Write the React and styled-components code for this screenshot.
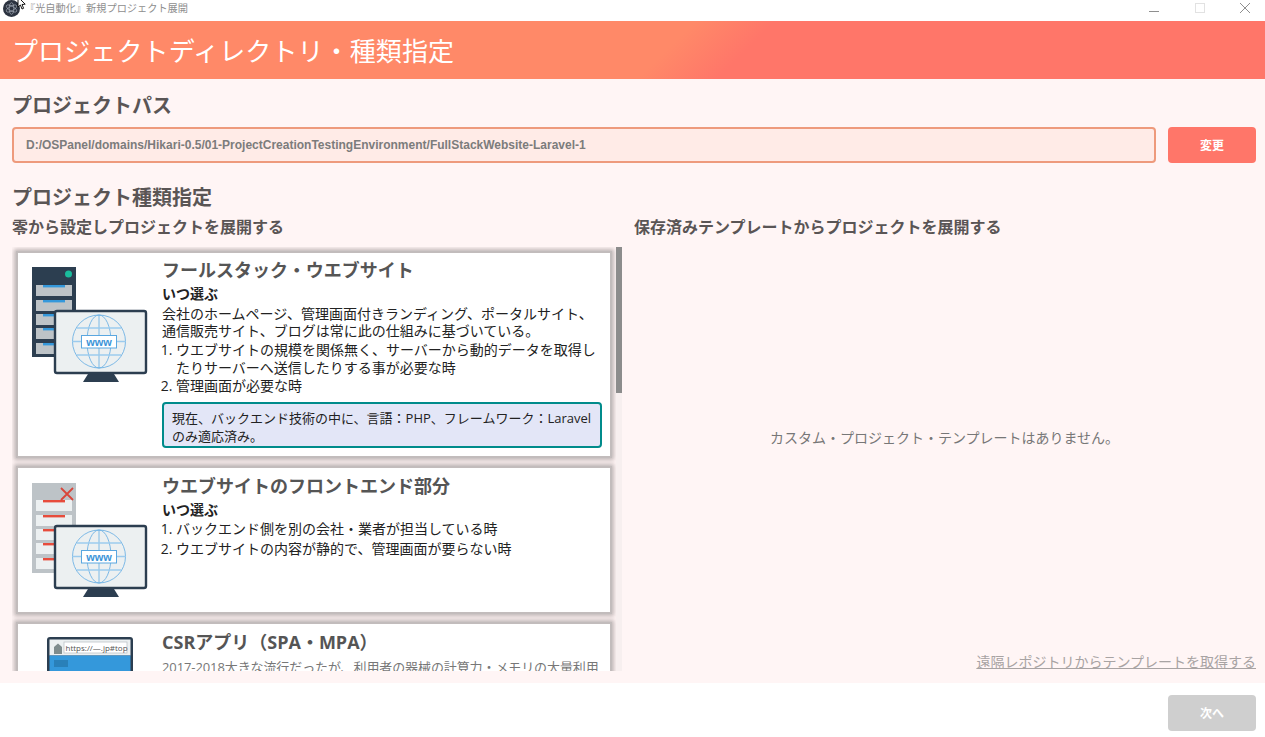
import React from 'react';
import styled, { createGlobalStyle } from 'styled-components';

const JP = `"Open Sans", "Noto Sans CJK JP", sans-serif`;

const GlobalStyle = createGlobalStyle`
  html, body {
    margin: 0;
    padding: 0;
    height: 100%;
    background: #fff;
  }
  * {
    box-sizing: border-box;
  }
  #root {
    height: 737px;
  }
`;

const Globe = () => (
  <g fill="none" stroke="#6fb2e4" strokeWidth="0.9">
    <circle cx="69" cy="76.5" r="26.5" />
    <ellipse cx="69" cy="76.5" rx="12" ry="26.5" />
    <path d="M69 50v53" />
    <path d="M47 63h44M42.5 76.5h53M47 90h44" strokeWidth="1.5" stroke="#9ccbee" />
    <rect x="51.5" y="70.5" width="35" height="12.5" fill="#fff" stroke="#5aa7e0" strokeWidth="1" />
    <text x="69" y="80.5" textAnchor="middle" fontFamily="Liberation Sans, sans-serif" fontSize="11" fontWeight="700" fill="#3c94d8" stroke="none">www</text>
  </g>
);

const Monitor = () => (
  <g>
    <path d="M60 109h22l2 0 5 8H53l5-8z" fill="#2c3e50" />
    <rect x="25" y="46" width="91" height="62" rx="2" fill="#ecf0f1" stroke="#2c3e50" strokeWidth="2.4" />
    <Globe />
  </g>
);

const DRAWERS = [20, 35, 49, 63, 78];

const ServerIcon = ({ removed }) => (
  <IconSvg viewBox="0 0 120 120">
    <rect x="2" y={removed ? 3 : 2} width="44" height="90" fill={removed ? '#bdc3c7' : '#2c3e50'} />
    {DRAWERS.map((y) => (
      <g key={y}>
        <rect x="6" y={y} width="36" height="11" fill={removed ? '#ecf0f1' : '#bdc3c7'} />
        <rect x="13" y={y} width="22" height="2.4" fill={removed ? '#e74c3c' : '#3498db'} />
      </g>
    ))}
    {removed ? (
      <path d="M31 8l12 12M43 8L31 20" stroke="#d9463a" strokeWidth="1.8" fill="none" />
    ) : (
      <circle cx="38.5" cy="9" r="3.5" fill="#1abc9c" />
    )}
    <Monitor />
  </IconSvg>
);

const BrowserIcon = () => (
  <IconSvg viewBox="0 0 120 120">
    <rect x="17" y="1" width="86" height="118" rx="3" fill="#2c3e50" />
    <rect x="19.5" y="3.5" width="81" height="16" fill="#ecf0f1" />
    <path d="M24 18v-7l4-3.5 4 3.5v7z" fill="#7f8c8d" />
    <rect x="34" y="6" width="63" height="11" fill="#fff" stroke="#bdc3c7" strokeWidth="0.8" />
    <text x="35.5" y="14.5" fontFamily="Open Sans, sans-serif" fontSize="8" fill="#555">https://—.jp#top</text>
    <rect x="19.5" y="19.5" width="81" height="98" fill="#3498db" />
    <rect x="24" y="24" width="14" height="7" fill="#2980b9" />
  </IconSvg>
);

const CursorIcon = () => (
  <Cursor viewBox="0 0 12 12">
    <path d="M1 -3l0 10 2.4-2 1.6 4 1.6-.7-1.6-3.8 3.2-.3z" fill="#fff" stroke="#000" strokeWidth="0.9" />
  </Cursor>
);

const AppIcon = () => (
  <AppLogo viewBox="0 0 16 16">
    <circle cx="8" cy="8" r="8" fill="#2c3340" />
    <g fill="none" stroke="#aab2bd" strokeWidth="0.6">
      <ellipse cx="8" cy="8" rx="5.5" ry="2.2" transform="rotate(30 8 8)" />
      <ellipse cx="8" cy="8" rx="5.5" ry="2.2" transform="rotate(90 8 8)" />
      <ellipse cx="8" cy="8" rx="5.5" ry="2.2" transform="rotate(150 8 8)" />
    </g>
  </AppLogo>
);

export default function App() {
  return (
    <>
      <GlobalStyle />
      <Page>
        <TitleBar>
          <TitleLeft>
            <AppIcon />
            <CursorIcon />
            <WindowTitle>『光自動化』新規プロジェクト展開</WindowTitle>
          </TitleLeft>
          <WindowControls>
            <ControlIcon viewBox="0 0 10 10"><path d="M0 8.5h10" /></ControlIcon>
            <ControlIcon $light viewBox="0 0 10 10"><rect x="0.5" y="0.5" width="9" height="9" /></ControlIcon>
            <ControlIcon viewBox="0 0 10 10"><path d="M0 0l10 10M10 0L0 10" /></ControlIcon>
          </WindowControls>
        </TitleBar>

        <Header>プロジェクトディレクトリ・種類指定</Header>

        <Main>
          <SectionTitle $bottom={6}>プロジェクトパス</SectionTitle>
          <PathRow>
            <PathField>D:/OSPanel/domains/Hikari-0.5/01-ProjectCreationTestingEnvironment/FullStackWebsite-Laravel-1</PathField>
            <ActionButton>変更</ActionButton>
          </PathRow>

          <SectionTitle $top={20} $bottom={2}>プロジェクト種類指定</SectionTitle>
          <Columns>
            <Column>
              <ColumnTitle>零から設定しプロジェクトを展開する</ColumnTitle>
              <ListFrame>
                <CardList>
                  <Card>
                    <ServerIcon />
                    <CardBody>
                      <CardTitle>フールスタック・ウエブサイト</CardTitle>
                      <WhenLabel>いつ選ぶ</WhenLabel>
                      <Paragraph>会社のホームページ、管理画面付きランディング、ポータルサイト、通信販売サイト、ブログは常に此の仕組みに基づいている。</Paragraph>
                      <Steps>
                        <li>ウエブサイトの規模を関係無く、サーバーから動的データを取得したりサーバーへ送信したりする事が必要な時</li>
                        <li>管理画面が必要な時</li>
                      </Steps>
                      <Notice>現在、バックエンド技術の中に、言語：PHP、フレームワーク：Laravelのみ適応済み。</Notice>
                    </CardBody>
                  </Card>
                  <Card>
                    <ServerIcon removed />
                    <CardBody $lower>
                      <CardTitle>ウエブサイトのフロントエンド部分</CardTitle>
                      <WhenLabel>いつ選ぶ</WhenLabel>
                      <Steps $gap={3}>
                        <li>バックエンド側を別の会社・業者が担当している時</li>
                        <li>ウエブサイトの内容が静的で、管理画面が要らない時</li>
                      </Steps>
                    </CardBody>
                  </Card>
                  <Card>
                    <BrowserIcon />
                    <CardBody $lower>
                      <CardTitle>CSRアプリ（SPA・MPA）</CardTitle>
                      <Paragraph $muted>2017-2018大きな流行だったが、利用者の器械の計算力・メモリの大量利用</Paragraph>
                    </CardBody>
                  </Card>
                </CardList>
                <ScrollTrack>
                  <ScrollThumb />
                </ScrollTrack>
              </ListFrame>
            </Column>
            <Column>
              <ColumnTitle>保存済みテンプレートからプロジェクトを展開する</ColumnTitle>
              <TemplatePanel>
                <EmptyMessage>カスタム・プロジェクト・テンプレートはありません。</EmptyMessage>
                <RemoteLink href="#">遠隔レポジトリからテンプレートを取得する</RemoteLink>
              </TemplatePanel>
            </Column>
          </Columns>
        </Main>

        <Footer>
          <ActionButton $disabled>次へ</ActionButton>
        </Footer>
      </Page>
    </>
  );
}

const Page = styled.div`
  height: 737px;
  display: flex;
  flex-direction: column;
  font-family: ${JP};
  overflow: hidden;
`;

const TitleBar = styled.div`
  height: 21px;
  flex: none;
  display: flex;
  align-items: flex-start;
  justify-content: space-between;
  background: #fff;
`;

const TitleLeft = styled.div`
  position: relative;
  display: flex;
  align-items: center;
  padding: 0 0 0 3px;
  height: 16px;
`;

const AppLogo = styled.svg`
  width: 17px;
  height: 17px;
  margin-right: 5px;
`;

const Cursor = styled.svg`
  position: absolute;
  left: 17px;
  top: 0;
  width: 12px;
  height: 12px;
  overflow: visible;
`;

const WindowTitle = styled.span`
  font-size: 10.2px;
  color: #8e8e8e;
  line-height: 16px;
`;

const WindowControls = styled.div`
  display: flex;
  gap: 35.5px;
  padding: 3px 15px 0 0;
`;

const ControlIcon = styled.svg`
  width: 10px;
  height: 10px;
  fill: none;
  stroke: ${(p) => (p.$light ? '#e2e2e2' : '#8f8f8f')};
  stroke-width: 1;
`;

const Header = styled.header`
  height: 58px;
  flex: none;
  display: flex;
  align-items: center;
  padding-left: 12px;
  font-size: 26px;
  letter-spacing: 0.12px;
  color: #fff;
  background: linear-gradient(135deg, #ff8968 0%, #ff8968 52.6%, #ff7669 58.6%, #ff7669 100%);
`;

const Main = styled.main`
  height: 604px;
  flex: none;
  display: flex;
  flex-direction: column;
  padding: 12px 9px 12px 12px;
  background: #fff5f5;
`;

const SectionTitle = styled.h2`
  margin: ${(p) => p.$top || 0}px 0 ${(p) => p.$bottom}px;
  height: 30px;
  line-height: 30px;
  font-size: 20px;
  font-weight: 700;
  color: #5a5555;
`;

const PathRow = styled.div`
  display: flex;
  gap: 12px;
`;

const PathField = styled.div`
  flex: 1;
  height: 36px;
  display: flex;
  align-items: center;
  padding-left: 12px;
  font-family: "Liberation Sans", sans-serif;
  font-size: 12px;
  font-weight: 700;
  color: #7c7c7c;
  background: #ffebe7;
  border: 2px solid #ee9a7c;
  border-radius: 4px;
`;

const ActionButton = styled.button`
  width: 88px;
  height: 36px;
  flex: none;
  border: none;
  border-radius: 4px;
  font-family: ${JP};
  font-size: 12px;
  font-weight: 700;
  color: #fff;
  background: ${(p) => (p.$disabled ? '#cfcfcf' : '#ff7669')};
`;

const Columns = styled.div`
  flex: 1;
  min-height: 0;
  display: grid;
  grid-template-columns: 622px 1fr;
`;

const Column = styled.section`
  min-height: 0;
  display: flex;
  flex-direction: column;
`;

const ColumnTitle = styled.h3`
  margin: 0 0 8px;
  height: 24px;
  line-height: 24px;
  font-size: 16px;
  font-weight: 700;
  color: #5a5555;
`;

const ListFrame = styled.div`
  flex: 1;
  min-height: 0;
  width: 610px;
  display: flex;
`;

const CardList = styled.div`
  flex: 1;
  min-width: 0;
  overflow: hidden;
  display: flex;
  flex-direction: column;
  gap: 12px;
  padding: 6px;
`;

const ScrollTrack = styled.div`
  width: 6px;
  flex: none;
  background: #f7efef;
`;

const ScrollThumb = styled.div`
  height: 146px;
  background: #8c8c8c;
`;

const Card = styled.article`
  display: flex;
  flex: none;
  gap: 12px;
  padding: 12px 8px 12px 12px;
  background: #fff;
  box-shadow: 0 0 0 2px #c2bcbc, 0 0 4px 4px rgba(150, 142, 142, 0.6);
`;

const IconSvg = styled.svg`
  width: 120px;
  height: 120px;
  flex: none;
`;

const CardBody = styled.div`
  flex: 1;
  min-width: 0;
  margin: ${(p) => (p.$lower ? -6 : -7)}px 0 -4px;
`;

const CardTitle = styled.h4`
  margin: 0 0 3px;
  line-height: 24px;
  font-size: 18px;
  font-weight: 700;
  color: #555;
`;

const WhenLabel = styled.div`
  line-height: 18px;
  font-size: 14px;
  font-weight: 700;
  color: #222;
`;

const Paragraph = styled.p`
  margin: ${(p) => (p.$muted ? '5px 0 0' : '2px 0')};
  line-height: 17px;
  font-size: ${(p) => (p.$muted ? 13 : 14)}px;
  letter-spacing: ${(p) => (p.$muted ? -0.1 : 0)}px;
  color: ${(p) => (p.$muted ? '#777' : '#222')};
`;

const Steps = styled.ol`
  margin: 1px 0 0;
  padding: 0 0 0 14px;
  font-size: 14px;
  line-height: 17.5px;
  color: #222;

  li {
    margin-bottom: ${(p) => p.$gap || 1}px;
  }
`;

const Notice = styled.div`
  margin-top: 7px;
  height: 46px;
  padding: 5px 8px;
  font-size: 13px;
  line-height: 18px;
  color: #222;
  background: #e3e6f7;
  border: 2px solid #008b8b;
  border-radius: 4px;
`;

const TemplatePanel = styled.div`
  flex: 1;
  display: flex;
  flex-direction: column;
  align-items: center;
`;

const EmptyMessage = styled.div`
  flex: 1;
  display: flex;
  align-items: center;
  font-size: 14px;
  color: #777;
  padding: 0 1px 26px 0;
`;

const RemoteLink = styled.a`
  align-self: flex-end;
  margin-bottom: -1px;
  font-size: 14px;
  line-height: 20px;
  color: #a8a3a3;
  text-decoration: underline;
`;

const Footer = styled.footer`
  flex: 1;
  display: flex;
  justify-content: flex-end;
  align-items: flex-start;
  padding: 12px 9px 0 0;
  background: #fff;
`;
